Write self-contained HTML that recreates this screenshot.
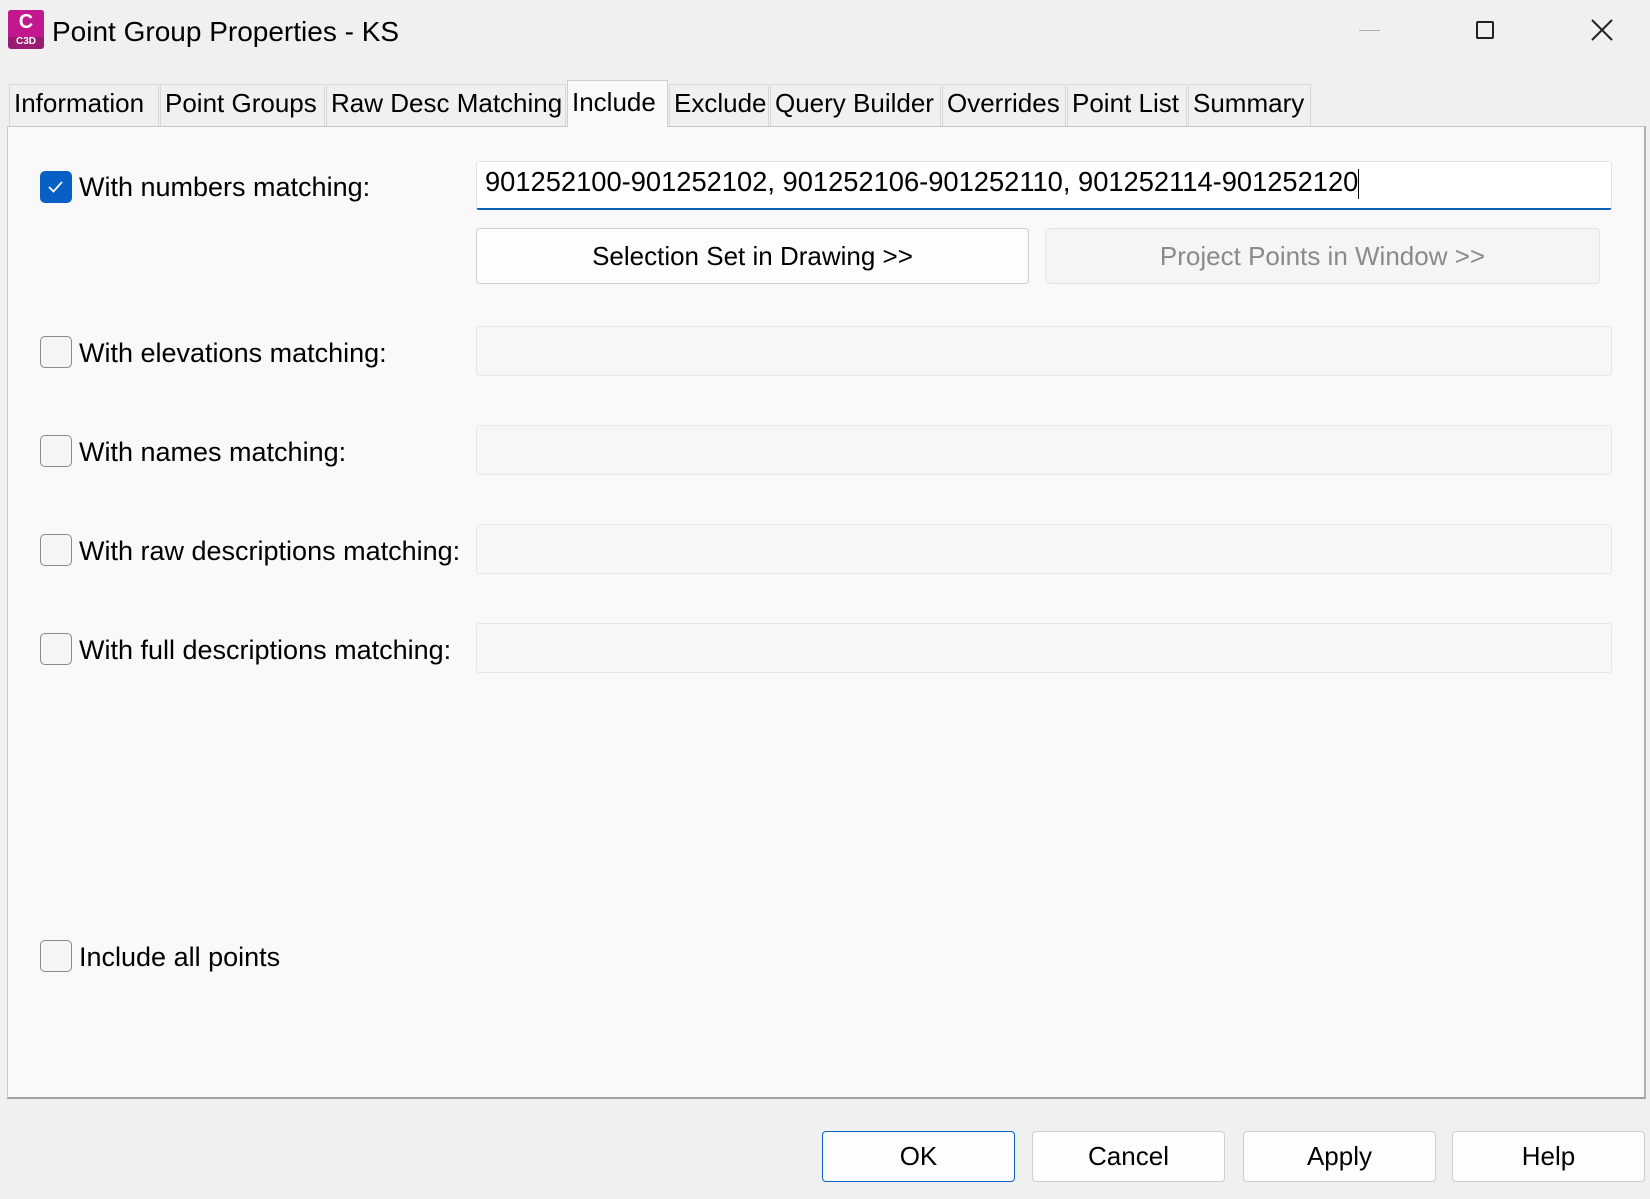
<!DOCTYPE html>
<html><head><meta charset="utf-8"><style>
*{box-sizing:border-box;margin:0;padding:0}
body{width:1650px;height:1199px;background:#f0f0f0;font-family:"Liberation Sans",sans-serif;color:#000;position:relative;overflow:hidden}
.a{position:absolute}
.title{left:52px;top:16px;font-size:28px;white-space:nowrap}
.tab{position:absolute;top:84px;height:42px;border:1px solid #d8d8d8;border-bottom:none;background:#f0f0f0;font-size:26px;line-height:36px;padding-left:4px;white-space:nowrap}
.tab.sel{top:80px;height:47px;background:#f9f9f9;z-index:2;border-color:#d0d0d0;line-height:42px}
.panel{left:7px;top:126px;width:1639px;height:973px;background:#f9f9f9;border:1px solid #c8c8c8;border-bottom:2px solid #a0a0a0;border-right:2px solid #b0b0b0}
.cb{position:absolute;left:40px;width:32px;height:32px;border:1.5px solid #8a8a8a;border-radius:5px;background:#f6f6f6}
.cb.on{background:#0860c4;border-color:#0860c4}
.lbl{position:absolute;left:79px;font-size:27px;white-space:nowrap;line-height:30px}
.in{position:absolute;left:476px;width:1136px;height:50px;border:1px solid #e6e6e6;background:#f7f7f7;border-radius:3px}
.btn{position:absolute;border:1px solid #cfcfcf;border-radius:4px;background:#fdfdfd;font-size:26px;text-align:center;white-space:nowrap}
</style></head><body>
<div class="a" style="left:8px;top:10px;width:36px;height:39px;background:#9b1a72;border-radius:3px"></div>
<div class="a" style="left:8px;top:10px;width:36px;height:27px;background:#c3178f;border-radius:3px 3px 0 0"></div>
<div class="a" style="left:8px;top:11px;width:36px;text-align:center;color:#fff;font-weight:bold;font-size:20px">C</div>
<div class="a" style="left:8px;top:36px;width:36px;text-align:center;color:#fff;font-weight:bold;font-size:10px">C3D</div>
<div class="a title">Point Group Properties - KS</div>
<div class="a" style="left:1359px;top:30px;width:21px;height:1px;background:#b0b0b0"></div>
<div class="a" style="left:1476px;top:21px;width:18px;height:18px;border:2px solid #222;border-radius:2px"></div>
<svg class="a" style="left:1591px;top:19px" width="22" height="22"><path d="M1 1L21 21M21 1L1 21" stroke="#222" stroke-width="2"/></svg>
<div class="a" style="left:0;top:65px;width:1650px;height:18px;background:#f0f0f0"></div>

<div class="tab" style="left:9px;width:150px">Information</div>
<div class="tab" style="left:160px;width:165px">Point Groups</div>
<div class="tab" style="left:326px;width:240px">Raw Desc Matching</div>
<div class="tab sel" style="left:567px;width:101px">Include</div>
<div class="tab" style="left:669px;width:100px">Exclude</div>
<div class="tab" style="left:770px;width:171px">Query Builder</div>
<div class="tab" style="left:942px;width:124px">Overrides</div>
<div class="tab" style="left:1067px;width:120px">Point List</div>
<div class="tab" style="left:1188px;width:123px">Summary</div>

<div class="a panel"></div>

<div class="cb on" style="top:171px"><svg width="29" height="29" style="position:absolute;left:0;top:0"><path d="M8 15L12.5 19.5L21 10" stroke="#fff" stroke-width="1.8" fill="none"/></svg></div>
<div class="lbl" style="top:172px">With numbers matching:</div>
<div class="in" style="top:161px;background:#fff;border-color:#e4e4e4;border-bottom:2px solid #0a5fb8;height:49px"></div>
<div class="a" style="left:485px;top:166px;font-size:27.3px;white-space:nowrap">901252100-901252102, 901252106-901252110, 901252114-901252120<span style="display:inline-block;width:1px;height:30px;background:#000;vertical-align:middle"></span></div>
<div class="btn" style="left:476px;top:228px;width:553px;height:56px;line-height:54px">Selection Set in Drawing &gt;&gt;</div>
<div class="btn" style="left:1045px;top:228px;width:555px;height:56px;line-height:54px;background:#f5f5f5;border-color:#e4e4e4;color:#8a8a8a">Project Points in Window &gt;&gt;</div>

<div class="cb" style="top:336px"></div><div class="lbl" style="top:338px">With elevations matching:</div><div class="in" style="top:326px"></div>
<div class="cb" style="top:435px"></div><div class="lbl" style="top:437px">With names matching:</div><div class="in" style="top:425px"></div>
<div class="cb" style="top:534px"></div><div class="lbl" style="top:536px">With raw descriptions matching:</div><div class="in" style="top:524px"></div>
<div class="cb" style="top:633px"></div><div class="lbl" style="top:635px">With full descriptions matching:</div><div class="in" style="top:623px"></div>
<div class="cb" style="top:940px"></div><div class="lbl" style="top:942px">Include all points</div>

<div class="btn" style="left:822px;top:1131px;width:193px;height:51px;line-height:49px;border-color:#0a64c2">OK</div>
<div class="btn" style="left:1032px;top:1131px;width:193px;height:51px;line-height:49px">Cancel</div>
<div class="btn" style="left:1243px;top:1131px;width:193px;height:51px;line-height:49px">Apply</div>
<div class="btn" style="left:1452px;top:1131px;width:193px;height:51px;line-height:49px">Help</div>
</body></html>
